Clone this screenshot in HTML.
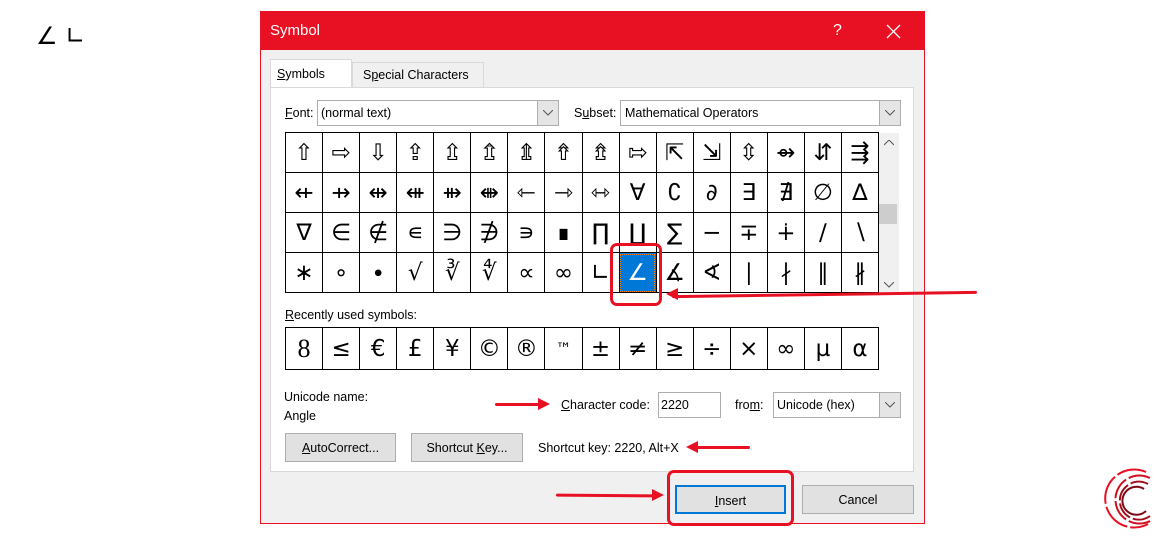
<!DOCTYPE html>
<html><head><meta charset="utf-8"><style>
*{margin:0;padding:0;box-sizing:border-box}
body{width:1158px;height:539px;background:#fff;position:relative;overflow:hidden;font-family:"Liberation Sans","DejaVu Sans",sans-serif;font-size:12.5px;color:#000}
.a{position:absolute}
.dlg{left:260px;top:11px;width:665px;height:513px;background:#f0f0f0;border:1px solid #e81123}
.tb{left:0;top:0;width:663px;height:38px;background:#e81123;color:#fff}
.grid{border-collapse:collapse;position:absolute;table-layout:fixed}
.grid td{border:1px solid #000;text-align:center;font-family:"DejaVu Sans",sans-serif;padding:0;overflow:hidden}
.btn{background:#e1e1e1;border:1px solid #adadad;text-align:center}
u{text-decoration:underline}
.arrow{position:absolute;height:3px;background:#e81123;border-radius:2px}
.dd{position:absolute;width:21px;height:24px;background:#e5e5e5;border-left:1px solid #adadad}
.dd svg{position:absolute;left:5px;top:9px}
</style></head><body>
<div class="a" style="left:36px;top:22px;font-family:'DejaVu Sans',sans-serif;font-size:24px">∠ ∟</div>

<div class="a dlg">
 <div class="a tb"><div class="a" style="left:9px;top:10px;font-size:15px">Symbol</div>
  <div class="a" style="left:572px;top:10px;font-size:16px">?</div>
  <svg class="a" style="left:625px;top:12px" width="15" height="15"><path d="M1 1L14 14M14 1L1 14" stroke="#fff" stroke-width="1.3"/></svg></div>
 <div class="a" style="left:9px;top:47px;width:82px;height:30px;background:#fff;border:1px solid #d9d9d9;border-bottom:none"></div>
 <div class="a" style="left:16px;top:55px;font-size:12.5px"><u>S</u>ymbols</div>
 <div class="a" style="left:91px;top:50px;width:132px;height:25px;background:#f0f0f0;border:1px solid #d9d9d9;border-bottom:none"></div>
 <div class="a" style="left:102px;top:56px">S<u>p</u>ecial Characters</div>
 <div class="a" style="left:9px;top:75px;width:644px;height:385px;background:#fff;border:1px solid #d9d9d9"></div>
 <div class="a" style="left:24px;top:94px"><u>F</u>ont:</div>
 <div class="a" style="left:56px;top:88px;width:242px;height:26px;border:1px solid #adadad;background:#fff;padding:5px 3px">(normal text)</div>
 <div class="dd" style="left:276px;top:89px"><svg width="10" height="6"><path d="M0 0L5 5L10 0" fill="none" stroke="#555"/></svg></div>
 <div class="a" style="left:313px;top:94px">S<u>u</u>bset:</div>
 <div class="a" style="left:359px;top:88px;width:281px;height:26px;border:1px solid #adadad;background:#fff;padding:5px 4px">Mathematical Operators</div>
 <div class="dd" style="left:618px;top:89px"><svg width="10" height="6"><path d="M0 0L5 5L10 0" fill="none" stroke="#555"/></svg></div>
 <div class="a" style="left:618px;top:121px;width:20px;height:160px;background:#f0f0f0"></div>
 <div class="a" style="left:618px;top:192px;width:18px;height:20px;background:#cdcdcd"></div>
 <svg class="a" style="left:623px;top:128px" width="10" height="6"><path d="M0 5L5 0L10 5" fill="none" stroke="#555"/></svg>
 <svg class="a" style="left:623px;top:270px" width="10" height="6"><path d="M0 0L5 5L10 0" fill="none" stroke="#555"/></svg>
 <div class="a" style="left:24px;top:296px"><u>R</u>ecently used symbols:</div>
 <div class="a" style="left:23px;top:378px">Unicode name:</div>
 <div class="a" style="left:23px;top:397px">Angle</div>
 <div class="a" style="left:300px;top:386px"><u>C</u>haracter code:</div>
 <div class="a" style="left:397px;top:380px;width:63px;height:26px;border:1px solid #adadad;background:#fff;padding:5px 2px">2220</div>
 <div class="a" style="left:474px;top:386px">fro<u>m</u>:</div>
 <div class="a" style="left:512px;top:380px;width:128px;height:26px;border:1px solid #adadad;background:#fff;padding:5px 3px">Unicode (hex)</div>
 <div class="dd" style="left:618px;top:381px"><svg width="10" height="6"><path d="M0 0L5 5L10 0" fill="none" stroke="#555"/></svg></div>
 <div class="a btn" style="left:24px;top:421px;width:111px;height:29px;padding-top:7px"><u>A</u>utoCorrect...</div>
 <div class="a btn" style="left:150px;top:421px;width:112px;height:29px;padding-top:7px">Shortcut <u>K</u>ey...</div>
 <div class="a" style="left:277px;top:429px">Shortcut key: 2220, Alt+X</div>
 <div class="a btn" style="left:414px;top:473px;width:111px;height:29px;padding-top:7px;border:2px solid #0078d7"><u>I</u>nsert</div>
 <div class="a btn" style="left:541px;top:473px;width:112px;height:29px;padding-top:7px">Cancel</div>
</div>

<table class="grid" style="left:285px;top:132px;width:594px;height:161px;font-size:23px">
<tr><td>⇧</td><td>⇨</td><td>⇩</td><td>⇪</td><td>⇫</td><td>⇬</td><td>⇭</td><td>⇮</td><td>⇯</td><td>⇰</td><td>⇱</td><td>⇲</td><td>⇳</td><td>⇴</td><td>⇵</td><td>⇶</td></tr>
<tr><td>⇷</td><td>⇸</td><td>⇹</td><td>⇺</td><td>⇻</td><td>⇼</td><td>⇽</td><td>⇾</td><td>⇿</td><td>∀</td><td>∁</td><td>∂</td><td>∃</td><td>∄</td><td>∅</td><td>∆</td></tr>
<tr><td>∇</td><td>∈</td><td>∉</td><td>∊</td><td>∋</td><td>∌</td><td>∍</td><td>∎</td><td>∏</td><td>∐</td><td>∑</td><td>−</td><td>∓</td><td>∔</td><td>∕</td><td>∖</td></tr>
<tr><td>∗</td><td>∘</td><td>∙</td><td>√</td><td>∛</td><td>∜</td><td>∝</td><td>∞</td><td>∟</td><td style="background:#0078d7;color:#fff;outline:1px dotted #f80;outline-offset:-2px">∠</td><td>∡</td><td>∢</td><td>∣</td><td>∤</td><td>∥</td><td>∦</td></tr>
</table>
<table class="grid" style="left:285px;top:327px;width:594px;height:43px;font-size:23px;border:1px solid #999">
<tr><td style="font-family:'Liberation Serif';font-size:26px">8</td><td>≤</td><td>€</td><td>£</td><td>¥</td><td>©</td><td>®</td><td style="font-size:16px">™</td><td>±</td><td>≠</td><td>≥</td><td>÷</td><td>×</td><td>∞</td><td>µ</td><td>α</td></tr>
</table>

<div class="a" style="left:610px;top:243px;width:52px;height:63px;border:3px solid #e81123;border-radius:7px"></div>
<div class="a" style="left:667px;top:470px;width:127px;height:56px;border:3px solid #e81123;border-radius:7px"></div>
<div class="arrow" style="left:672px;top:293px;width:305px;transform:rotate(-0.8deg)"></div>
<div class="a" style="left:666px;top:292px;border-right:12px solid #e81123;border-top:6px solid transparent;border-bottom:6px solid transparent;margin-top:-4px"></div>
<div class="arrow" style="left:495px;top:403px;width:45px"></div>
<div class="a" style="left:538px;top:398px;border-left:12px solid #e81123;border-top:6px solid transparent;border-bottom:6px solid transparent"></div>
<div class="arrow" style="left:695px;top:446px;width:55px"></div>
<div class="a" style="left:686px;top:441px;border-right:12px solid #e81123;border-top:6px solid transparent;border-bottom:6px solid transparent"></div>
<div class="arrow" style="left:556px;top:494px;width:100px;transform:rotate(0.5deg)"></div>
<div class="a" style="left:652px;top:489px;border-left:12px solid #e81123;border-top:6px solid transparent;border-bottom:6px solid transparent"></div>

<svg class="a" style="left:1098px;top:464px" width="60" height="70" viewBox="0 0 60 70" fill="none" stroke-width="2">
<path d="M48 8 A29 29 0 1 0 50 60" stroke="#e81123" stroke-dasharray="30 3"/>
<path d="M52 14 A24 24 0 1 0 54 56" stroke="#d0101f" stroke-dasharray="22 3"/>
<path d="M50 20 A19 19 0 1 0 52 52" stroke="#a00d1a" stroke-dasharray="18 3"/>
<path d="M46 25 A14 14 0 1 0 48 47" stroke="#800a14"/>
</svg>
</body></html>
